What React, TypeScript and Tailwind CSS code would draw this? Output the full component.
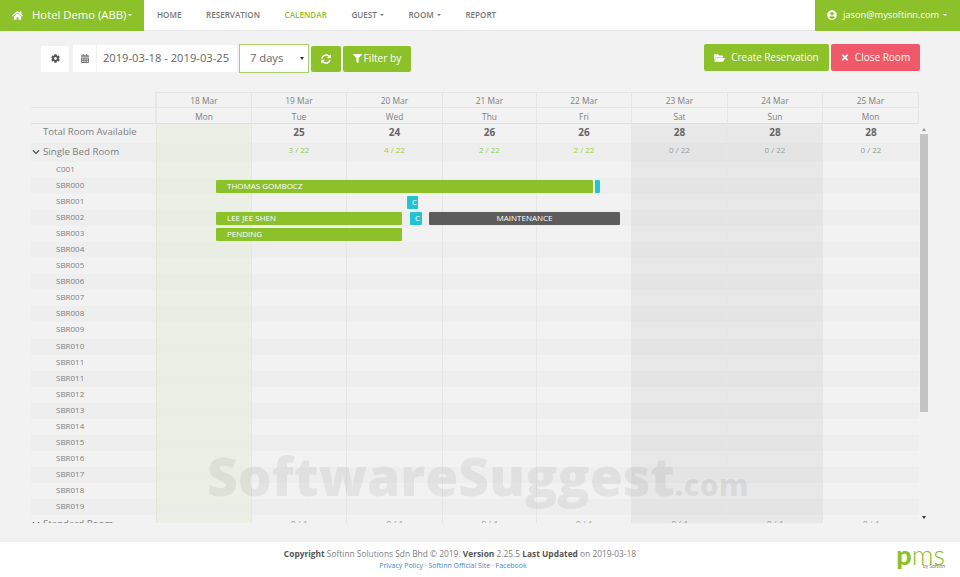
import { FaCalendarAlt, FaChevronDown, FaCog, FaFilter, FaFolderOpen, FaHome, FaSyncAlt, FaTimes, FaUserCircle } from "react-icons/fa";

const days = [
  { date: "18 Mar", day: "Mon", total: "", count: "" },
  { date: "19 Mar", day: "Tue", total: "25", count: "3 / 22" },
  { date: "20 Mar", day: "Wed", total: "24", count: "4 / 22" },
  { date: "21 Mar", day: "Thu", total: "26", count: "2 / 22" },
  { date: "22 Mar", day: "Fri", total: "26", count: "2 / 22" },
  { date: "23 Mar", day: "Sat", total: "28", count: "0 / 22" },
  { date: "24 Mar", day: "Sun", total: "28", count: "0 / 22" },
  { date: "25 Mar", day: "Mon", total: "28", count: "0 / 22" },
];

const rooms = [
  "C001", "SBR000", "SBR001", "SBR002", "SBR003", "SBR004", "SBR005", "SBR006", "SBR007", "SBR008", "SBR009",
  "SBR010", "SBR011", "SBR011", "SBR012", "SBR013", "SBR014", "SBR015", "SBR016", "SBR017", "SBR018", "SBR019",
];

const gridCols = "grid grid-cols-[126px_95px_95px_96px_94px_95px_96px_95px_96px]";

// tint per kolom: vandaag groen, weekend grijs
function cellTint(i: number) {
  if (i === 0) return "bg-[#e6ebd8]/50";
  if (i === 5 || i === 6) return "bg-black/[0.04]";
  return "";
}

function Cells({ values, className }: { values?: string[]; className?: string }) {
  return (
    <>
      {days.map((d, i) => (
        <div
          key={d.date + i}
          className={`flex justify-center border-r border-[#e6e6e6] ${i === 7 ? "border-r-0" : ""} ${cellTint(i)} ${className ?? ""}`}
        >
          {values ? values[i] : null}
        </div>
      ))}
    </>
  );
}

function Bar({ left, width, className, children }: { left: number; width: number; className: string; children?: React.ReactNode }) {
  return (
    <div
      className={`absolute top-[2px] flex h-[13px] items-center overflow-hidden rounded-[1px] pb-[2px] text-[8px] text-white ${className}`}
      style={{ left, width }}
    >
      {children}
    </div>
  );
}

function RoomRow({ name, index }: { name: string; index: number }) {
  return (
    <div className={`relative h-[16.05px] text-[8px] leading-[14px] text-[#808080] ${gridCols} ${index % 2 === 1 ? "bg-[#eeeeee]" : ""}`}>
      <div className="border-r border-[#e4e4e4] pl-[25px]">{name}</div>
      <Cells />
      {name === "SBR000" && (
        <>
          <Bar left={185} width={377} className="bg-[#8cc12a] pl-[11px]">THOMAS GOMBOCZ</Bar>
          <Bar left={564} width={5} className="bg-[#25c3cf]" />
        </>
      )}
      {name === "SBR001" && <Bar left={376} width={11} className="bg-[#25c3cf] pl-[5px]">C</Bar>}
      {name === "SBR002" && (
        <>
          <Bar left={185} width={186} className="bg-[#8cc12a] pl-[11px]">LEE JEE SHEN</Bar>
          <Bar left={379} width={12} className="bg-[#25c3cf] pl-[5px]">C</Bar>
          <Bar left={398} width={191} className="justify-center bg-[#5c5c5c]">MAINTENANCE</Bar>
        </>
      )}
      {name === "SBR003" && <Bar left={185} width={186} className="bg-[#8cc12a] pl-[11px]">PENDING</Bar>}
    </div>
  );
}

function NavItem({ label, active, caret }: { label: string; active?: boolean; caret?: boolean }) {
  return (
    <span className={`flex items-center gap-[3px] text-[8.1px] font-semibold ${active ? "text-[#8cc12a]" : "text-[#777]"}`}>
      {label}
      {caret && <span className="mt-[1px] border-x-[2.5px] border-t-[2.5px] border-x-transparent border-t-[#777]" />}
    </span>
  );
}

export default function App() {
  return (
    <div className="flex h-[577px] w-[960px] flex-col overflow-hidden bg-[#f2f2f2] font-['Open_Sans',sans-serif]">
      {/* topbar */}
      <header className="flex h-[31px] shrink-0 items-center justify-between border-b border-[#e7e7e7] bg-white">
        <div className="flex h-full items-center">
          <div className="flex h-[31px] w-[144px] items-center bg-[#8cc12a] pl-[12px] text-white">
            <FaHome className="h-[11px] w-[11px]" />
            <span className="ml-[9px] text-[11.3px]">Hotel Demo (ABB)</span>
            <span className="ml-[2px] border-x-[2.5px] border-t-[2.5px] border-x-transparent border-t-white" />
          </div>
          <nav className="ml-[13px] flex items-center gap-[24.6px]">
            <NavItem label="HOME" />
            <NavItem label="RESERVATION" />
            <NavItem label="CALENDAR" active />
            <NavItem label="GUEST" caret />
            <NavItem label="ROOM" caret />
            <NavItem label="REPORT" />
          </nav>
        </div>
        <div className="flex h-[31px] w-[145px] items-center bg-[#8cc12a] pl-[12px] text-[9.3px] text-white">
          <FaUserCircle className="h-[10px] w-[10px]" />
          <span className="ml-[6px]">jason@mysoftinn.com</span>
          <span className="ml-[4px] border-x-[2.5px] border-t-[2.5px] border-x-transparent border-t-white" />
        </div>
      </header>

      {/* toolbar */}
      <div className="flex h-[61px] shrink-0 items-start justify-between pl-[41px] pr-[40px] pt-[13px]">
        <div className="flex items-center">
          <div className="flex h-[26px] w-[28px] items-center justify-center rounded-[2px] bg-white text-[#555]">
            <FaCog className="h-[9px] w-[9px]" />
          </div>
          <div className="ml-[4px] flex h-[27px] w-[23px] items-center justify-center bg-white text-[#777]">
            <FaCalendarAlt className="h-[9px] w-[8px]" />
          </div>
          <div className="flex h-[27px] w-[141px] items-center justify-center border-l border-[#f2f2f2] bg-white pr-[2px] text-[11.2px] text-[#666]">
            2019-03-18 - 2019-03-25
          </div>
          <div className="relative ml-[2px] flex h-[29px] w-[70px] items-center border border-[#a9d16a] bg-white pl-[10px] text-[11.2px] text-[#666]">
            7 days
            <span className="absolute right-[4px] top-[12px] border-x-[2px] border-t-[3px] border-x-transparent border-t-[#333]" />
          </div>
          <div className="ml-[2px] flex h-[26px] w-[30px] items-center justify-center rounded-[2px] bg-[#8cc12a] text-white">
            <FaSyncAlt className="h-[10px] w-[10px]" />
          </div>
          <div className="ml-[2px] flex h-[26px] w-[68px] items-center justify-center gap-[2px] rounded-[2px] bg-[#8cc12a] text-[10.2px] text-white">
            <FaFilter className="h-[9px] w-[9px]" />
            Filter by
          </div>
        </div>
        <div className="flex items-center gap-[2px]">
          <div className="flex h-[27px] w-[125px] items-center justify-center gap-[6px] rounded-[2px] bg-[#8cc12a] text-[9.9px] text-white">
            <FaFolderOpen className="h-[10px] w-[11px]" />
            Create Reservation
          </div>
          <div className="flex h-[27px] w-[89px] items-center justify-center gap-[6px] rounded-[2px] bg-[#f0596a] text-[10px] text-white">
            <FaTimes className="h-[9px] w-[8px]" />
            Close Room
          </div>
        </div>
      </div>

      {/* calendar */}
      <div className="relative ml-[31px] w-[897px] shrink-0">
        <div className={`h-[32px] w-[888px] text-[8.4px] text-[#808080] ${gridCols} grid-rows-[16px_16px] border-b border-[#dedede]`}>
          <div className="border-b border-r-2 border-[#e6e6e6]" />
          {days.map((d) => (
            <div key={d.date} className="flex items-center justify-center border-b border-r border-t border-[#e6e6e6] pt-[2px]">{d.date}</div>
          ))}
          <div className="border-r-2 border-[#e6e6e6]" />
          {days.map((d) => (
            <div key={d.date + d.day} className="flex items-center justify-center border-r border-[#e6e6e6] pt-[3px]">{d.day}</div>
          ))}
        </div>

        <div className="flex">
          <div className="h-[399px] w-[888px] overflow-hidden">
            <div className={`h-[19px] leading-[16px] ${gridCols}`}>
              <div className="border-r border-[#e4e4e4] pl-[12px] text-[9.6px] text-[#808080]">Total Room Available</div>
              <Cells values={days.map((d) => d.total)} className="text-[10px] font-bold text-[#666]" />
            </div>
            <div className={`h-[19px] bg-[#eeeeee] leading-[14px] ${gridCols}`}>
              <div className="flex items-center gap-[3px] border-r border-[#e4e4e4] pb-[2px] pl-px text-[9.7px] leading-[16px] text-[#808080]">
                <FaChevronDown className="h-[8px] w-[8px] text-[#555]" />
                Single Bed Room
              </div>
              {days.map((d, i) => (
                <div key={d.date} className={`flex justify-center border-r border-[#e6e6e6] text-[8px] ${i === 7 ? "border-r-0" : ""} ${cellTint(i)} ${i >= 1 && i <= 4 ? "text-[#9ccb4a]" : "text-[#999]"}`}>
                  {d.count}
                </div>
              ))}
            </div>
            {rooms.map((r, i) => (
              <RoomRow key={r + i} name={r} index={i} />
            ))}
            <div className={`h-[19px] leading-[16px] ${gridCols}`}>
              <div className="flex items-center gap-[3px] border-r border-[#e4e4e4] pb-[2px] pl-px text-[9.7px] text-[#808080]">
                <FaChevronDown className="h-[8px] w-[8px] text-[#555]" />
                Standard Room
              </div>
              {days.map((d, i) => (
                <div key={d.date} className={`flex justify-center border-r border-[#e6e6e6] text-[8px] text-[#999] ${i === 7 ? "border-r-0" : ""} ${cellTint(i)}`}>
                  {i > 0 ? "0 / 4" : ""}
                </div>
              ))}
            </div>
          </div>

          {/* scrollbar */}
          <div className="ml-px flex h-[399px] w-[8px] flex-col items-center">
            <span className="mt-[4px] border-x-[2px] border-b-[3px] border-x-transparent border-b-[#999]" />
            <div className="mt-[3px] h-[278px] w-[8px] bg-[#c4c4c4]" />
            <span className="mt-[104px] border-x-[2px] border-t-[3px] border-x-transparent border-t-[#333]" />
          </div>
        </div>

        {/* watermark */}
        <div className="pointer-events-none absolute left-[176px] top-[357px] flex items-baseline whitespace-nowrap font-extrabold leading-none text-black/[0.06]">
          <span className="text-[53.4px]">SoftwareSuggest</span>
          <span className="text-[30px]">.com</span>
        </div>
      </div>

      {/* footer */}
      <footer className="relative mt-[19px] flex flex-1 flex-col items-center bg-white pr-[40px] pt-[6px] text-[8.4px] leading-[11.5px] text-[#808080]">
        <div>
          <b className="text-[#555]">Copyright</b> Softinn Solutions Sdn Bhd © 2019. <b className="text-[#555]">Version</b> 2.25.5{" "}
          <b className="text-[#555]">Last Updated</b> on 2019-03-18
        </div>
        <div className="mr-[14px] text-[7px] text-[#4a86c5]">Privacy Policy · Softinn Official Site · Facebook</div>
        <div className="absolute right-[15px] top-[2px] flex flex-col items-end font-['Lato',sans-serif] text-[#8cc12a]">
          <div className="text-[27px] leading-[22px]">
            <span className="font-black">p</span>
            <span className="font-light">ms</span>
          </div>
          <div className="-mt-[2px] text-[5px] leading-[5px] text-[#777]">by Softinn</div>
        </div>
      </footer>
    </div>
  );
}
